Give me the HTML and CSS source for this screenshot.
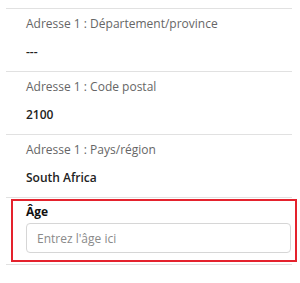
FILE: index.html
```html
<!DOCTYPE html>
<html lang="fr">
<head>
    <meta charset="UTF-8">
    <meta name="viewport" content="width=device-width, initial-scale=1.0">
    <title>Adresse</title>
    <link rel="stylesheet" href="styles.css">
</head>
<body>
    <div class="fields">
        <div class="field">
            <div class="field-label">Adresse 1 : Département/province</div>
            <div class="field-value">---</div>
        </div>
        <div class="field">
            <div class="field-label">Adresse 1 : Code postal</div>
            <div class="field-value">2100</div>
        </div>
        <div class="field">
            <div class="field-label">Adresse 1 : Pays/région</div>
            <div class="field-value">South Africa</div>
        </div>
        <div class="field field-edit">
            <label for="age" class="edit-label">Âge</label>
            <input type="text" id="age" placeholder="Entrez l'âge ici">
            <div class="highlight"></div>
        </div>
    </div>
</body>
</html>
```

FILE: styles.css
```css
* {
    padding: 0;
    margin: 0;
    box-sizing: border-box;
}

body {
    font-family: "Open Sans", "Noto Sans", Arial, sans-serif;
    background-color: #fff;
}

.fields {
    margin: 8px 0 0 6px;
    width: 286px;
    border-bottom: 1px solid #e1e1e1;
}

.field {
    border-top: 1px solid #e1e1e1;
    padding: 7px 0 11px 20px;
}

.field-label {
    font-size: 12px;
    line-height: 16px;
    color: #666;
    margin-bottom: 12px;
}

.field-value {
    font-size: 12px;
    line-height: 16px;
    font-weight: 600;
    color: #222;
}

.field-edit {
    position: relative;
    padding: 6px 0 11px 20px;
}

.edit-label {
    display: block;
    font-size: 12px;
    line-height: 16px;
    font-weight: 700;
    color: #111;
    margin-bottom: 3px;
}

input {
    display: block;
    width: 265px;
    height: 30px;
    padding: 0 10px;
    border: 1px solid #d6d6d6;
    border-radius: 4px;
    font-family: inherit;
    font-size: 12px;
    color: #222;
}

input::placeholder {
    color: #8a8a8a;
}

/* annotation box over the edited field */
.highlight {
    position: absolute;
    left: 5px;
    top: 1px;
    width: 286px;
    height: 63px;
    border: 2px solid #e4222d;
    pointer-events: none;
}
```
